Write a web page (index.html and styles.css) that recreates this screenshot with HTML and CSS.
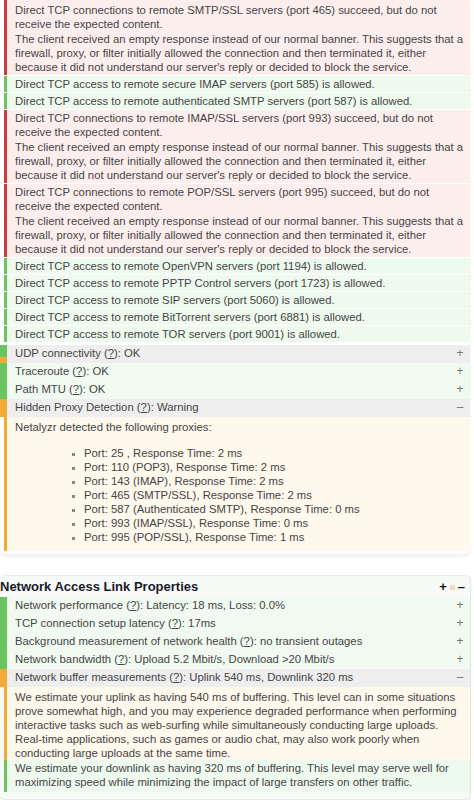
FILE: index.html
```html
<!DOCTYPE html>
<html>
<head>
<meta charset="utf-8">
<link rel="stylesheet" href="styles.css">
</head>
<body>
<div class="section top">
  <div class="sub bad firstblock">
    <p>Direct TCP connections to remote SMTP/SSL servers (port 465) succeed, but do not receive the expected content.</p>
    <p>The client received an empty response instead of our normal banner. This suggests that a firewall, proxy, or filter initially allowed the connection and then terminated it, either because it did not understand our server's reply or decided to block the service.</p>
  </div>
  <div class="sub ok"><p>Direct TCP access to remote secure IMAP servers (port 585) is allowed.</p></div>
  <div class="sub ok"><p>Direct TCP access to remote authenticated SMTP servers (port 587) is allowed.</p></div>
  <div class="sub bad">
    <p>Direct TCP connections to remote IMAP/SSL servers (port 993) succeed, but do not receive the expected content.</p>
    <p>The client received an empty response instead of our normal banner. This suggests that a firewall, proxy, or filter initially allowed the connection and then terminated it, either because it did not understand our server's reply or decided to block the service.</p>
  </div>
  <div class="sub bad">
    <p>Direct TCP connections to remote POP/SSL servers (port 995) succeed, but do not receive the expected content.</p>
    <p>The client received an empty response instead of our normal banner. This suggests that a firewall, proxy, or filter initially allowed the connection and then terminated it, either because it did not understand our server's reply or decided to block the service.</p>
  </div>
  <div class="sub ok"><p>Direct TCP access to remote OpenVPN servers (port 1194) is allowed.</p></div>
  <div class="sub ok"><p>Direct TCP access to remote PPTP Control servers (port 1723) is allowed.</p></div>
  <div class="sub ok"><p>Direct TCP access to remote SIP servers (port 5060) is allowed.</p></div>
  <div class="sub ok"><p>Direct TCP access to remote BitTorrent servers (port 6881) is allowed.</p></div>
  <div class="sub ok"><p>Direct TCP access to remote TOR servers (port 9001) is allowed.</p></div>

  <div class="hdr grey split first"><span>UDP connectivity (<u>?</u>): OK</span><span class="tog">+</span></div>
  <div class="hdr greenbg okbar"><span>Traceroute (<u>?</u>): OK</span><span class="tog">+</span></div>
  <div class="hdr greenbg okbar"><span>Path MTU (<u>?</u>): OK</span><span class="tog">+</span></div>
  <div class="hdr grey warnbar"><span>Hidden Proxy Detection (<u>?</u>): Warning</span><span class="tog">&ndash;</span></div>
  <div class="detail warn proxies">
    <p>Netalyzr detected the following proxies:</p>
    <ul>
      <li>Port: 25 , Response Time: 2 ms</li>
      <li>Port: 110 (POP3), Response Time: 2 ms</li>
      <li>Port: 143 (IMAP), Response Time: 2 ms</li>
      <li>Port: 465 (SMTP/SSL), Response Time: 2 ms</li>
      <li>Port: 587 (Authenticated SMTP), Response Time: 0 ms</li>
      <li>Port: 993 (IMAP/SSL), Response Time: 0 ms</li>
      <li>Port: 995 (POP/SSL), Response Time: 1 ms</li>
    </ul>
  </div>
</div>

<div class="section box">
  <div class="title">
    <h2>Network Access Link Properties</h2>
    <div class="ctrls"><span class="pm">+</span><span class="sq"></span><span class="pm">&ndash;</span></div>
  </div>
  <div class="hdr greenbg okbar"><span>Network performance (<u>?</u>): Latency: 18 ms, Loss: 0.0%</span><span class="tog">+</span></div>
  <div class="hdr greenbg okbar"><span>TCP connection setup latency (<u>?</u>): 17ms</span><span class="tog">+</span></div>
  <div class="hdr greenbg okbar"><span>Background measurement of network health (<u>?</u>): no transient outages</span><span class="tog">+</span></div>
  <div class="hdr greenbg okbar"><span>Network bandwidth (<u>?</u>): Upload 5.2 Mbit/s, Download &gt;20 Mbit/s</span><span class="tog">+</span></div>
  <div class="hdr grey warnbar"><span>Network buffer measurements (<u>?</u>): Uplink 540 ms, Downlink 320 ms</span><span class="tog">&ndash;</span></div>
  <div class="detail warn uplink">
    <p>We estimate your uplink as having 540 ms of buffering. This level can in some situations prove somewhat high, and you may experience degraded performance when performing interactive tasks such as web-surfing while simultaneously conducting large uploads. Real-time applications, such as games or audio chat, may also work poorly when conducting large uploads at the same time.</p>
  </div>
  <div class="detail okd">
    <p>We estimate your downlink as having 320 ms of buffering. This level may serve well for maximizing speed while minimizing the impact of large transfers on other traffic.</p>
  </div>
</div>
</body>
</html>
```

FILE: styles.css
```css
html, body {
  margin: 0;
  padding: 0;
  background: #ffffff;
}
body {
  font-family: "Liberation Sans", Arial, sans-serif;
  font-size: 11.3px;
  line-height: 14px;
  color: #454545;
  width: 474px;
}
p {
  margin: 0;
}
u {
  text-decoration: underline;
}

.section {
  width: 470px;
}
.top {
  padding-bottom: 3px;
  border-radius: 0 0 6px 6px;
  box-shadow: 0 3px 3px rgba(120, 130, 150, 0.12);
}

.sub {
  margin: 0 0 1px 4px;
  border-left: 3px solid;
  padding: 1px 6px 1px 8px;
}
.sub.firstblock {
  padding-top: 3px;
}
.sub p + p {
  margin-top: 1px;
}
.bad {
  background: #fdeeee;
  border-color: #cc3c3c;
}
.ok {
  background: #eefaee;
  border-color: #6cc460;
}

.hdr {
  display: flex;
  justify-content: space-between;
  border-left: 7px solid #6cc460;
  padding: 1px 6px 3px 8px;
}
.hdr.first {
  margin-top: 3px;
}
.grey {
  background: #eeeeee;
}
.greenbg {
  background: #f0faf0;
}
.okbar {
  border-left-color: #6cc460;
}
.warnbar {
  border-left-color: #f4aa37;
}
.split {
  border-image: linear-gradient(#6cc460 65%, #f4aa37 65%) 1;
  border-style: solid;
  border-width: 0 0 0 7px;
}
.tog {
  color: #777;
  width: 8px;
  text-align: center;
  font-size: 12px;
}

.detail {
  margin-left: 4px;
  border-left: 3px solid;
  padding: 3px 6px 2px 8px;
}
.warn {
  background: #fef8ed;
  border-color: #f4aa37;
}
.uplink {
  padding-bottom: 0;
}
.okd {
  background: #effaef;
  border-color: #6cc460;
  padding-top: 1px;
  padding-bottom: 3px;
}
.proxies {
  padding-bottom: 1px;
}
.proxies ul {
  margin: 12px 0 6px 0;
  padding-left: 69px;
  list-style: square;
}
.proxies li::marker {
  color: #888;
  font-size: 9px;
}

.box {
  margin-top: 21px;
  border: 1px solid #e6eae6;
  border-left: 0;
  border-radius: 6px;
  background: #f7faf7;
  padding-bottom: 7px;
  box-shadow: 0 2px 3px rgba(120, 130, 150, 0.12);
}
.title {
  display: flex;
  justify-content: space-between;
  align-items: center;
  padding: 3px 5px 3px 0;
}
.title h2 {
  margin: 0;
  font-size: 13px;
  line-height: 15px;
  font-weight: bold;
  color: #1a1a2a;
}
.ctrls {
  display: flex;
  align-items: center;
  gap: 3px;
}
.pm {
  font-weight: bold;
  color: #111;
  font-size: 13px;
}
.sq {
  width: 5px;
  height: 5px;
  background: #f1dcc0;
  margin-top: 2px;
}
```
